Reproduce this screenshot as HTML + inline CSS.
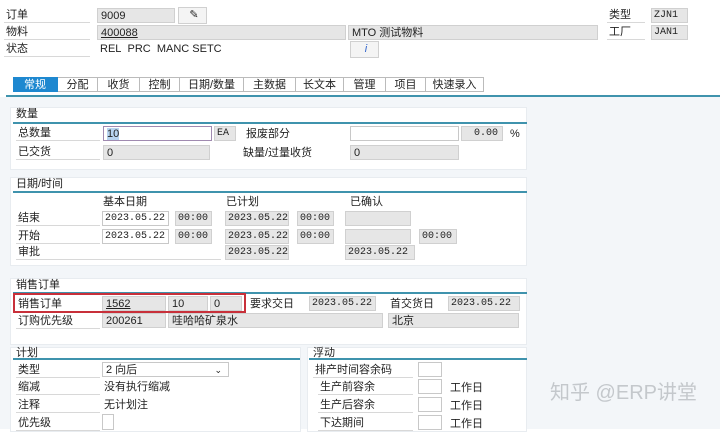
<!DOCTYPE html>
<html><head><meta charset="utf-8"><style>
*{margin:0;padding:0;box-sizing:border-box}
body{width:720px;height:429px;overflow:hidden;background:#fff;font-family:"Liberation Sans","Noto Sans CJK SC",sans-serif;font-size:11px;color:#222;position:relative}
.a{position:absolute;white-space:nowrap;line-height:14px}
.f{position:absolute;height:15px;line-height:14px;background:#e6e6e6;border:1px solid #d0d0d0;padding-left:3px;white-space:nowrap;overflow:hidden}
.w{background:#fff;border:1px solid #c8c8c8}
.m{font-family:"Liberation Mono","Noto Sans CJK SC",monospace;font-size:10px;padding-left:2px}
.lb{position:absolute;height:15px;line-height:14px;border-bottom:1px solid #d8d8d8;white-space:nowrap;padding-left:2px}
.p{position:absolute;background:#fff;border:1px solid #e8ecf0}
.ln{position:absolute;height:2px;background:#3f93ad}
.tab{position:absolute;top:77px;height:15px;line-height:14px;border:1px solid #bbb;border-left:none;background:#fff;text-align:center}
</style></head><body>
<div style="position:absolute;left:0;top:97px;width:720px;height:332px;background:#f3f6f9"></div>

<div class="lb" style="left:4px;top:8px;width:86px">订单</div>
<div class="f" style="left:97px;top:8px;width:78px">9009</div>
<div class="f" style="left:178px;top:7px;width:29px;height:17px;background:#f4f4f4;text-align:center">✎</div>
<div class="lb" style="left:4px;top:25px;width:86px">物料</div>
<div class="f" style="left:97px;top:25px;width:249px"><u>400088</u></div>
<div class="f" style="left:348px;top:25px;width:250px">MTO 测试物料</div>
<div class="lb" style="left:4px;top:42px;width:86px">状态</div>
<div class="a" style="left:100px;top:42px">REL&nbsp; PRC&nbsp; MANC SETC</div>
<div class="f" style="left:350px;top:41px;width:29px;height:17px;background:#f4f4f4;text-align:center;font-style:italic;color:#36c">i</div>
<div class="lb" style="left:607px;top:8px;width:38px">类型</div>
<div class="f m" style="left:651px;top:8px;width:37px">ZJN1</div>
<div class="lb" style="left:607px;top:25px;width:38px">工厂</div>
<div class="f m" style="left:651px;top:25px;width:37px">JAN1</div>

<div class="tab" style="left:13px;width:45px;background:#1e88d0;color:#fff;border-color:#1e88d0">常规</div>
<div class="tab" style="left:58px;width:40px">分配</div>
<div class="tab" style="left:98px;width:42px">收货</div>
<div class="tab" style="left:140px;width:40px">控制</div>
<div class="tab" style="left:180px;width:64px">日期/数量</div>
<div class="tab" style="left:244px;width:52px">主数据</div>
<div class="tab" style="left:296px;width:48px">长文本</div>
<div class="tab" style="left:344px;width:42px">管理</div>
<div class="tab" style="left:386px;width:40px">项目</div>
<div class="tab" style="left:426px;width:58px">快速录入</div>
<div class="ln" style="left:6px;top:95px;width:714px"></div>

<div class="p" style="left:10px;top:107px;width:517px;height:63px"></div>
<div class="a" style="left:16px;top:107px">数量</div>
<div class="ln" style="left:13px;top:122px;width:514px"></div>
<div class="lb" style="left:16px;top:126px;width:84px">总数量</div>
<div class="f w" style="left:103px;top:126px;width:109px;border-color:#a08ab0"><span style="background:#b8d4f0">10</span></div>
<div class="f m" style="left:214px;top:126px;width:22px">EA</div>
<div class="a" style="left:246px;top:127px">报废部分</div>
<div class="f w" style="left:350px;top:126px;width:109px"></div>
<div class="f m" style="left:461px;top:126px;width:42px;text-align:right;padding-right:4px">0.00</div>
<div class="a" style="left:510px;top:127px">%</div>
<div class="lb" style="left:16px;top:145px;width:84px">已交货</div>
<div class="f" style="left:103px;top:145px;width:107px">0</div>
<div class="a" style="left:243px;top:146px">缺量/过量收货</div>
<div class="f" style="left:350px;top:145px;width:109px">0</div>

<div class="p" style="left:10px;top:177px;width:517px;height:89px"></div>
<div class="a" style="left:16px;top:177px">日期/时间</div>
<div class="ln" style="left:13px;top:191px;width:514px"></div>
<div class="a" style="left:103px;top:195px">基本日期</div>
<div class="a" style="left:226px;top:195px">已计划</div>
<div class="a" style="left:350px;top:195px">已确认</div>
<div class="lb" style="left:16px;top:211px;width:84px">结束</div>
<div class="f w m" style="left:102px;top:211px;width:67px">2023.05.22</div>
<div class="f m" style="left:175px;top:211px;width:37px">00:00</div>
<div class="f m" style="left:225px;top:211px;width:64px">2023.05.22</div>
<div class="f m" style="left:297px;top:211px;width:37px">00:00</div>
<div class="f" style="left:345px;top:211px;width:66px"></div>
<div class="lb" style="left:16px;top:229px;width:84px">开始</div>
<div class="f w m" style="left:102px;top:229px;width:67px">2023.05.22</div>
<div class="f m" style="left:175px;top:229px;width:37px">00:00</div>
<div class="f m" style="left:225px;top:229px;width:64px">2023.05.22</div>
<div class="f m" style="left:297px;top:229px;width:37px">00:00</div>
<div class="f" style="left:345px;top:229px;width:66px"></div>
<div class="f m" style="left:419px;top:229px;width:38px">00:00</div>
<div class="lb" style="left:16px;top:245px;width:205px">审批</div>
<div class="f m" style="left:225px;top:245px;width:64px">2023.05.22</div>
<div class="f m" style="left:345px;top:245px;width:70px">2023.05.22</div>

<div class="p" style="left:10px;top:278px;width:517px;height:67px"></div>
<div class="a" style="left:16px;top:278px">销售订单</div>
<div class="ln" style="left:13px;top:292px;width:514px"></div>
<div style="position:absolute;left:13px;top:293px;width:233px;height:20px;border:2px solid #c8303a"></div>
<div class="a" style="left:18px;top:297px">销售订单</div>
<div class="f" style="left:102px;top:296px;width:64px"><u>1562</u></div>
<div class="f" style="left:168px;top:296px;width:40px">10</div>
<div class="f" style="left:210px;top:296px;width:32px">0</div>
<div class="a" style="left:250px;top:297px">要求交日</div>
<div class="f m" style="left:309px;top:296px;width:67px">2023.05.22</div>
<div class="a" style="left:390px;top:297px">首交货日</div>
<div class="f m" style="left:448px;top:296px;width:72px">2023.05.22</div>
<div class="lb" style="left:16px;top:314px;width:84px">订购优先级</div>
<div class="f" style="left:102px;top:313px;width:64px">200261</div>
<div class="f" style="left:168px;top:313px;width:215px">哇哈哈矿泉水</div>
<div class="f" style="left:388px;top:313px;width:131px">北京</div>

<div class="p" style="left:10px;top:347px;width:291px;height:85px"></div>
<div class="a" style="left:16px;top:346px">计划</div>
<div class="ln" style="left:13px;top:358px;width:287px"></div>
<div class="lb" style="left:16px;top:363px;width:84px">类型</div>
<div class="f w" style="left:102px;top:362px;width:127px">2 向后<span style="position:absolute;right:6px;font-size:9px">⌄</span></div>
<div class="lb" style="left:16px;top:380px;width:84px">缩减</div>
<div class="a" style="left:104px;top:380px">没有执行缩减</div>
<div class="lb" style="left:16px;top:398px;width:84px">注释</div>
<div class="a" style="left:104px;top:398px">无计划注</div>
<div class="lb" style="left:16px;top:416px;width:84px">优先级</div>
<div class="f w" style="left:102px;top:414px;width:12px;height:16px"></div>

<div class="p" style="left:307px;top:347px;width:220px;height:85px"></div>
<div class="a" style="left:313px;top:346px">浮动</div>
<div class="ln" style="left:309px;top:358px;width:218px"></div>
<div class="lb" style="left:313px;top:363px;width:100px">排产时间容余码</div>
<div class="f w" style="left:418px;top:362px;width:24px"></div>
<div class="lb" style="left:318px;top:380px;width:95px">生产前容余</div>
<div class="f w" style="left:418px;top:379px;width:24px"></div>
<div class="a" style="left:450px;top:381px">工作日</div>
<div class="lb" style="left:318px;top:398px;width:95px">生产后容余</div>
<div class="f w" style="left:418px;top:397px;width:24px"></div>
<div class="a" style="left:450px;top:399px">工作日</div>
<div class="lb" style="left:318px;top:416px;width:95px">下达期间</div>
<div class="f w" style="left:418px;top:415px;width:24px"></div>
<div class="a" style="left:450px;top:417px">工作日</div>

<div class="a" style="left:550px;top:380px;font-size:20px;line-height:26px;color:#c4c8cc">知乎 @ERP讲堂</div>
</body></html>
